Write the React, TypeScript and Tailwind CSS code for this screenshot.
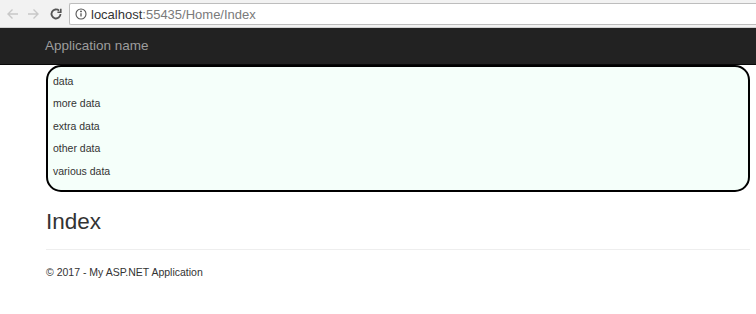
import * as React from 'react';

const items = ['data', 'more data', 'extra data', 'other data', 'various data'];

const BrowserBar: React.FC = () => (
    <div className="flex h-[28px] items-center bg-[#f2f2f2] border-b border-[#d0d0d0]">
        {/* nav buttons */}
        <div className="flex items-center w-[69px] shrink-0">
            <svg width="14" height="14" viewBox="0 0 14 14" className="ml-[6px]" fill="none" stroke="#c8c8c8" strokeWidth="1.4">
                <path d="M12 7H2M6.5 2.5L2 7l4.5 4.5" />
            </svg>
            <svg width="14" height="14" viewBox="0 0 14 14" className="ml-[6px]" fill="none" stroke="#c8c8c8" strokeWidth="1.4">
                <path d="M2 7h10M7.5 2.5L12 7l-4.5 4.5" />
            </svg>
            <svg width="14" height="14" viewBox="0 0 14 14" className="ml-[9px]" fill="none" stroke="#555" strokeWidth="1.8">
                <path d="M11.5 7a4.5 4.5 0 1 1-1.4-3.3" />
                <path d="M11.8 1.8v3.4H8.4" strokeWidth="1.6" />
            </svg>
        </div>
        <div className="flex flex-1 items-center h-[22px] mt-[1px] bg-white border border-[#bdbdbd] rounded-l-[2px] border-r-0 pl-[5px]">
            <svg width="12" height="12" viewBox="0 0 12 12" fill="none" stroke="#555" strokeWidth="1.1">
                <circle cx="6" cy="6" r="5" />
                <path d="M6 5.2v3.4" strokeWidth="1.3" />
                <circle cx="6" cy="3.4" r="0.4" fill="#555" />
            </svg>
            <span className="ml-[4px] text-[13px] leading-none font-['Liberation_Sans',Arial,sans-serif] text-[#333]">
                localhost<span className="text-[#7a7a7a]">:55435/Home/Index</span>
            </span>
        </div>
    </div>
);

export default function App() {
    return (
        <div className="w-[756px] h-[314px] bg-white overflow-hidden font-['Liberation_Sans',Arial,sans-serif] text-[#333]">
            <BrowserBar />

            {/* Navbar */}
            <div className="h-[37px] bg-[#222222] border-b border-[#080808] flex items-center pl-[45px]">
                <span className="text-[13.5px] text-[#9d9d9d] leading-none">Application name</span>
            </div>

            <div className="ml-[46px] mr-[6px]">
                {/* Data box */}
                <div className="border-2 border-black rounded-[15px] bg-[#f5fffa] pl-[5px] pt-[6.5px] pb-[4px]">
                    {items.map((item) => (
                        <p key={item} className="text-[10.5px] leading-[15px] mb-[7.5px] text-[#333]">
                            {item}
                        </p>
                    ))}
                </div>

                <h2 className="text-[22.5px] leading-[25px] mt-[16.5px] mb-[9px] text-[#333]">Index</h2>
                <hr className="border-0 border-t border-[#eeeeee] mt-[15px] mb-[15px]" />
                <footer>
                    <p className="text-[10.5px] leading-[15px] text-[#333]">© 2017 - My ASP.NET Application</p>
                </footer>
            </div>
        </div>
    );
}
